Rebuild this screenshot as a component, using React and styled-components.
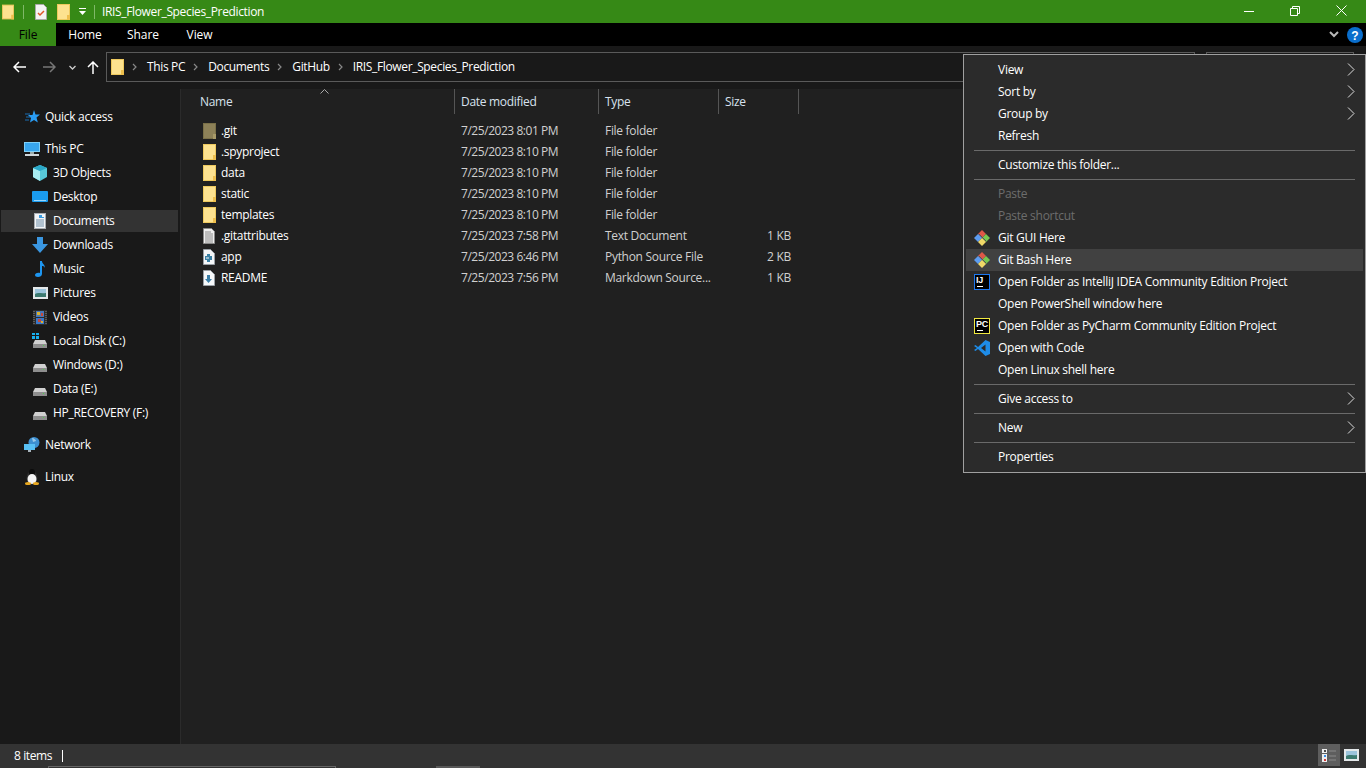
import React from "react";
import styled, { createGlobalStyle } from "styled-components";

const Global = createGlobalStyle`
  html, body { margin: 0; padding: 0; background: #202020; }
  body { font-family: "Open Sans", "Noto Sans", "Liberation Sans", sans-serif; font-size: 12px; color: #fff; }
  * { box-sizing: border-box; }
`;

const Window = styled.div`
  position: relative;
  width: 1366px;
  height: 768px;
  overflow: hidden;
  display: flex;
  flex-direction: column;
  background: #202020;
`;

const Label = styled.span`
  margin-bottom: 2px;
`;

const TitleBar = styled.div`
  height: 23px;
  background: #368916;
  display: flex;
  align-items: center;
  padding-left: 2px;
`;

const QuickSlot = styled.span`
  display: flex;
  align-items: center;
  margin-left: ${(p) => p.$ml || 0}px;
`;

const Divider = styled.div`
  width: 1px;
  height: 14px;
  margin-left: ${(p) => p.$ml}px;
  background: #80b868;
`;

const Title = styled.span`
  margin-left: 7px;
  letter-spacing: -0.35px;
`;

const WindowButtons = styled.div`
  margin-left: auto;
  display: flex;
  align-items: center;
  padding-right: 2px;
`;

const WinBtn = styled.div`
  width: 46px;
  height: 23px;
  padding-bottom: 2px;
  display: flex;
  align-items: center;
  justify-content: center;
`;

const Ribbon = styled.div`
  height: 23px;
  background: #000;
  display: flex;
  align-items: stretch;
  padding-right: 3px;
`;

const RibbonTab = styled.div`
  width: ${(p) => p.$w}px;
  display: flex;
  align-items: center;
  justify-content: center;
  letter-spacing: -0.1px;
  background: ${(p) => (p.$active ? "#368916" : "transparent")};
  color: ${(p) => (p.$active ? "#000" : "#fff")};
`;

const RibbonRight = styled.div`
  margin-left: auto;
  display: flex;
  align-items: center;
  gap: 8px;
`;

const NavRow = styled.div`
  height: 43px;
  background: #191919;
  display: flex;
  align-items: flex-start;
  padding-top: 6px;
`;

const NavButtons = styled.div`
  width: 106px;
  height: 30px;
  display: flex;
  align-items: center;
  padding-left: 13px;
`;

const NavIcon = styled.svg`
  margin-left: ${(p) => p.$ml || 0}px;
  flex: none;
`;

const AddressBox = styled.div`
  width: 1089px;
  height: 30px;
  border: 1px solid #5a5a5a;
  display: flex;
  align-items: center;
  padding-left: 4px;
  letter-spacing: -0.35px;
`;

const CrumbArrow = styled.svg`
  width: 5px;
  height: 8px;
  margin: 0 10px 0 8px;
`;

const SearchBox = styled.div`
  width: 148px;
  height: 30px;
  margin-left: 11px;
  border: 1px solid #5a5a5a;
`;

const Main = styled.div`
  flex: 1;
  display: flex;
  min-height: 0;
`;

const Sidebar = styled.div`
  width: 181px;
  background: #191919;
  border-right: 1px solid #2b2b2b;
  padding-top: 17px;
`;

const TreeGroup = styled.div`
  display: flex;
  flex-direction: column;
  gap: 2px;
  margin-bottom: 10px;
`;

const TreeRow = styled.div`
  height: 22px;
  margin: 0 2px 0 1px;
  padding-left: ${(p) => (p.$child ? 31 : 23)}px;
  display: flex;
  align-items: center;
  gap: 5px;
  background: ${(p) => (p.$selected ? "#333" : "transparent")};
  letter-spacing: -0.3px;
  white-space: nowrap;
`;

const IconSlot = styled.span`
  width: 16px;
  height: 16px;
  flex: none;
  display: flex;
  align-items: center;
  justify-content: center;
`;

const FileIconSlot = styled.span`
  width: 16px;
  height: 16px;
  flex: none;
  padding-left: 1px;
  display: flex;
  align-items: center;
`;

const Content = styled.div`
  flex: 1;
  background: #202020;
`;

const Header = styled.div`
  position: relative;
  height: 25px;
  display: flex;
`;

const HeadCell = styled.div`
  width: ${(p) => p.$w}px;
  height: 25px;
  padding-left: ${(p) => p.$pad || 6}px;
  display: flex;
  align-items: center;
  color: #d8e2ee;
  border-right: 1px solid #555;
  letter-spacing: -0.3px;
`;

const SortCaret = styled.svg`
  position: absolute;
  left: 139px;
  top: 0;
`;

const FileRows = styled.div`
  margin-top: 6px;
`;

const FileRow = styled.div`
  height: 21px;
  display: flex;
  align-items: center;
  letter-spacing: -0.3px;
  white-space: nowrap;
`;

const NameCell = styled.div`
  width: 274px;
  padding-left: 21px;
  display: flex;
  align-items: center;
  gap: 3px;
`;

const Cell = styled.div`
  width: ${(p) => p.$w}px;
  padding-left: 6px;
  color: #d0d0d0;
  overflow: hidden;
  letter-spacing: ${(p) => p.$ls || -0.3}px;
`;

const SizeCell = styled.div`
  width: 72px;
  text-align: right;
  color: #d0d0d0;
`;

const StatusBar = styled.div`
  position: relative;
  height: 24px;
  background: #333;
  display: flex;
  align-items: center;
  padding-left: 14px;
  letter-spacing: -0.4px;
`;

const StatusSep = styled.div`
  width: 1px;
  height: 12px;
  margin-left: 10px;
  background: #fff;
`;

const ViewToggle = styled.div`
  width: 22px;
  height: 22px;
  display: flex;
  align-items: center;
  justify-content: center;
  background: ${(p) => (p.$on ? "#5e5e5e" : "transparent")};
`;

const StatusRight = styled.div`
  margin-left: auto;
  align-self: flex-start;
  display: flex;
  align-items: center;
  padding-right: 4px;
`;

const BottomTab = styled.div`
  position: absolute;
  left: 48px;
  bottom: 0;
  width: 288px;
  height: 2px;
  border: 1px solid #666;
  border-bottom: 0;
`;

const BottomBlock = styled.div`
  position: absolute;
  left: 436px;
  bottom: 0;
  width: 44px;
  height: 2px;
  background: #585858;
`;

const Menu = styled.div`
  position: absolute;
  left: 963px;
  top: 54px;
  width: 403px;
  height: 419px;
  background: #2b2b2b;
  border: 1px solid #a0a0a0;
  padding: 4px 2px;
`;

const MenuItem = styled.div`
  position: relative;
  height: 22px;
  padding-left: 32px;
  display: flex;
  align-items: center;
  color: ${(p) => (p.$disabled ? "#6d6d6d" : "#fff")};
  background: ${(p) => (p.$hover ? "#414141" : "transparent")};
  letter-spacing: -0.27px;
`;

const MenuIcon = styled.span`
  position: absolute;
  left: 8px;
  top: 3px;
  width: 16px;
  height: 16px;
  display: flex;
`;

const MenuArrow = styled.svg`
  position: absolute;
  right: 8px;
  top: 4px;
`;

const MenuSep = styled.div`
  height: 1px;
  margin: 3px 8px;
  background: #6a6a6a;
`;

const Folder = ({ w = 13, h = 16, dark }) => (
  <svg width={w} height={h} viewBox="0 0 13 16">
    <rect x="0.500" y="0.500" width="12" height="15" fill={dark ? "#8d8158" : "#fde28f"} stroke={dark ? "#7a7048" : "#eec95e"} />
    <rect x="10" y="11" width="3" height="5" fill={dark ? "#a89a68" : "#eebf4d"} />
  </svg>
);

const TextFile = () => (
  <svg width="12" height="16" viewBox="0 0 12 16">
    <path d="M.5.5h8l3 3v12H.5z" fill="#eee" stroke="#8a8a8a" />
    <path d="M2 4h6M2 6h8M2 8h8M2 10h8M2 12h8M2 14h8" stroke="#8c8c8c" />
  </svg>
);

const PyFile = () => (
  <svg width="12" height="16" viewBox="0 0 12 16">
    <path d="M.5.5h7l4 4v11H.5z" fill="#f4f6f8" stroke="#9aa0a6" />
    <path d="M4 5h3v2h2v4H7v2H4v-2H2V7h2z" fill="#3a80a4" />
    <path d="M3 9h3" stroke="#f4f6f8" />
  </svg>
);

const MdFile = () => (
  <svg width="12" height="16" viewBox="0 0 12 16">
    <path d="M.5.5h7l4 4v11H.5z" fill="#f6f8fa" stroke="#9aa0a6" />
    <path d="M4 5h3v4h2l-3.500 4L2 9h2z" fill="#3c7fa8" />
  </svg>
);

const Star = () => (
  <svg width="16" height="16" viewBox="0 0 16 16">
    <path d="M10 1l1.500 4.500H16l-3.500 3 1.300 5L10 11l-4 2.500 1-4.500L4 6h4.500z" fill="#2a9df4" />
    <path d="M1 5h5M2 8h4M1 11h4" stroke="#1a6fb4" />
  </svg>
);

const Pc = () => (
  <svg width="16" height="16" viewBox="0 0 16 16">
    <rect x="0" y="1" width="16" height="10" fill="#7fd0f8" />
    <rect x="1" y="2" width="14" height="8" fill="#38a6ee" />
    <rect x="6" y="11" width="4" height="2" fill="#9aa" />
    <rect x="1" y="13" width="14" height="2" fill="#cfd6da" />
  </svg>
);

const Cube = () => (
  <svg width="16" height="16" viewBox="0 0 16 16">
    <path d="M8 0l7 3v9l-7 4-7-4V3z" fill="#58c8d8" />
    <path d="M1 3l7 3v10l-7-4z" fill="#a8ecf0" />
    <path d="M8 0l7 3-7 3-7-3z" fill="#2aa8c8" />
  </svg>
);

const Desktop = () => (
  <svg width="16" height="16" viewBox="0 0 16 16">
    <rect x="0" y="2" width="16" height="11" rx="1" fill="#1a9cf0" />
    <rect x="2" y="11" width="12" height="1" fill="#9ad4f8" />
  </svg>
);

const Docs = () => (
  <svg width="12" height="16" viewBox="0 0 12 16">
    <rect x=".5" y=".5" width="11" height="15" fill="#f2f4f6" stroke="#a8adb2" />
    <path d="M5 2h3v2h2v1H5z" fill="#3a9ce0" />
    <path d="M2 7h8M2 9h8M2 11h8M2 13h8" stroke="#6f8ea8" />
  </svg>
);

const Down = () => (
  <svg width="16" height="16" viewBox="0 0 16 16">
    <path d="M5 0h6v7h5l-8 9-8-9h5z" fill="#3a96e0" />
  </svg>
);

const Music = () => (
  <svg width="12" height="16" viewBox="0 0 12 16">
    <path d="M6 0h2c0 3 3 3 3 7-1-2-2-2-3-2v8c0 2-2 3-4 3s-3-1-3-2 2-3 5-2z" fill="#1e96f0" />
  </svg>
);

const Pictures = () => (
  <svg width="15" height="12" viewBox="0 0 15 12">
    <rect x="0" y="0" width="15" height="12" fill="#e4e8ea" />
    <rect x="2" y="2" width="11" height="8" fill="#9cc4dc" />
    <path d="M2 7c3-2 6 0 11-1v4H2z" fill="#3c7a70" />
  </svg>
);

const Videos = () => (
  <svg width="14" height="15" viewBox="0 0 14 15">
    <rect width="14" height="15" fill="#2c2c2c" />
    <rect x="3" y="1" width="8" height="6" fill="#4a78b8" />
    <rect x="4" y="2" width="3" height="3" fill="#d8b030" />
    <rect x="8" y="3" width="2" height="3" fill="#c84838" />
    <rect x="3" y="8" width="8" height="6" fill="#3a78c8" />
    <rect x="5" y="9" width="3" height="3" fill="#c84838" />
    <rect x="8" y="11" width="2" height="2" fill="#d8b030" />
    <path d="M1 1v13M13 1v13" stroke="#888" strokeDasharray="1 1" />
  </svg>
);

const Disk = ({ win }) => (
  <svg width="16" height="16" viewBox="0 0 16 16">
    {win && <path d="M0 3h3v3H0zM4 3h3v3H4zM0 0h3v2H0zM4 0h3v2H4z" fill="#18b0f0" />}
    <path d="M3 7h10l2 4H1z" fill="#d0d0d0" />
    <rect x="1" y="11" width="14" height="4" fill="#8e8e8e" />
    <rect x="11" y="12" width="1" height="1" fill="#48d848" />
  </svg>
);

const Net = () => (
  <svg width="16" height="16" viewBox="0 0 16 16">
    <circle cx="10" cy="5.500" r="5.500" fill="#3d8fd0" />
    <path d="M8 1c2 0 4 2 4 3l-3 1z" fill="#9ac8e8" />
    <rect x="0" y="7" width="11" height="6" fill="#58c0f4" />
    <rect x="4" y="13" width="3" height="2" fill="#a8b4bc" />
  </svg>
);

const Tux = () => (
  <svg width="14" height="16" viewBox="0 0 14 16">
    <ellipse cx="7" cy="9" rx="5.500" ry="7" fill="#2a2a2a" />
    <ellipse cx="7" cy="3.500" rx="3" ry="3.500" fill="#0c0c0c" />
    <ellipse cx="7" cy="10" rx="4.500" ry="5" fill="#f4f4f4" />
    <ellipse cx="3" cy="14.500" rx="3" ry="1.500" fill="#e8a820" />
    <ellipse cx="11" cy="14.500" rx="3" ry="1.500" fill="#e8a820" />
  </svg>
);

const GitGem = () => (
  <svg width="16" height="16" viewBox="0 0 16 16">
    <path d="M8 0l4 4-4 4-4-4z" fill="#e05848" />
    <path d="M0 8l4-4 4 4-4 4z" fill="#5c9cf0" />
    <path d="M16 8l-4-4-4 4 4 4z" fill="#78c850" />
    <path d="M8 16l-4-4 4-4 4 4z" fill="#f0d868" />
    <path d="M5 4l7 7" stroke="#555" strokeWidth="1" />
  </svg>
);

const JetIcon = ({ color, children }) => (
  <svg width="16" height="16" viewBox="0 0 16 16">
    <rect x=".5" y=".5" width="15" height="15" fill="#000" stroke={color} />
    <text x="2" y="9" fontSize="9" fontWeight="700" fill="#fff" fontFamily="Liberation Sans, sans-serif">{children}</text>
    <rect x="3" y="12" width="6" height="1" fill="#fff" />
  </svg>
);

const VsCode = () => (
  <svg width="16" height="16" viewBox="0 0 16 16">
    <path d="M11.500 0L16 2v12l-4.500 2L4 9l-2.500 2L0 10l3-2-3-2 1.500-1L4 7z" fill="#1e8ce8" />
    <path d="M11.500 4.500v7L7 8z" fill="#2b2b2b" />
  </svg>
);

const tree = [
  [{ label: "Quick access", icon: <Star /> }],
  [
    { label: "This PC", icon: <Pc /> },
    { label: "3D Objects", icon: <Cube />, child: true },
    { label: "Desktop", icon: <Desktop />, child: true },
    { label: "Documents", icon: <Docs />, child: true, selected: true },
    { label: "Downloads", icon: <Down />, child: true },
    { label: "Music", icon: <Music />, child: true },
    { label: "Pictures", icon: <Pictures />, child: true },
    { label: "Videos", icon: <Videos />, child: true },
    { label: "Local Disk (C:)", icon: <Disk win />, child: true },
    { label: "Windows (D:)", icon: <Disk />, child: true },
    { label: "Data (E:)", icon: <Disk />, child: true },
    { label: "HP_RECOVERY (F:)", icon: <Disk />, child: true },
  ],
  [{ label: "Network", icon: <Net /> }],
  [{ label: "Linux", icon: <Tux /> }],
];

const files = [
  { name: ".git", date: "7/25/2023 8:01 PM", type: "File folder", icon: <Folder dark /> },
  { name: ".spyproject", date: "7/25/2023 8:10 PM", type: "File folder", icon: <Folder /> },
  { name: "data", date: "7/25/2023 8:10 PM", type: "File folder", icon: <Folder /> },
  { name: "static", date: "7/25/2023 8:10 PM", type: "File folder", icon: <Folder /> },
  { name: "templates", date: "7/25/2023 8:10 PM", type: "File folder", icon: <Folder /> },
  { name: ".gitattributes", date: "7/25/2023 7:58 PM", type: "Text Document", size: "1 KB", icon: <TextFile /> },
  { name: "app", date: "7/25/2023 6:46 PM", type: "Python Source File", size: "2 KB", icon: <PyFile /> },
  { name: "README", date: "7/25/2023 7:56 PM", type: "Markdown Source...", size: "1 KB", icon: <MdFile /> },
];

const menu = [
  { label: "View", arrow: true },
  { label: "Sort by", arrow: true },
  { label: "Group by", arrow: true },
  { label: "Refresh" },
  { sep: true },
  { label: "Customize this folder..." },
  { sep: true },
  { label: "Paste", disabled: true },
  { label: "Paste shortcut", disabled: true },
  { label: "Git GUI Here", icon: <GitGem /> },
  { label: "Git Bash Here", icon: <GitGem />, hover: true },
  { label: "Open Folder as IntelliJ IDEA Community Edition Project", icon: <JetIcon color="#1e78f0">IJ</JetIcon> },
  { label: "Open PowerShell window here" },
  { label: "Open Folder as PyCharm Community Edition Project", icon: <JetIcon color="#f0e840">PC</JetIcon> },
  { label: "Open with Code", icon: <VsCode /> },
  { label: "Open Linux shell here" },
  { sep: true },
  { label: "Give access to", arrow: true },
  { sep: true },
  { label: "New", arrow: true },
  { sep: true },
  { label: "Properties" },
];

const crumbs = ["This PC", "Documents", "GitHub", "IRIS_Flower_Species_Prediction"];

export default function App() {
  return (
    <Window>
      <Global />
      <TitleBar>
        <QuickSlot><Folder w={12} h={16} /></QuickSlot>
        <Divider $ml={9} />
        <QuickSlot $ml={11}>
          <svg width="12" height="16" viewBox="0 0 12 16">
            <path d="M.5.5h8l3 3v12H.5z" fill="#f4f4f4" stroke="#aaa" />
            <path d="M3 9l2 2 4-4" fill="none" stroke="#e0562a" strokeWidth="1.500" />
          </svg>
        </QuickSlot>
        <QuickSlot $ml={10}><Folder w={13} h={16} /></QuickSlot>
        <QuickSlot $ml={9}>
          <svg width="7" height="7" viewBox="0 0 7 7">
            <path d="M0 .5h7" stroke="#fff" />
            <path d="M0 3h7L3.500 7z" fill="#fff" />
          </svg>
        </QuickSlot>
        <Divider $ml={8} />
        <Title>IRIS_Flower_Species_Prediction</Title>
        <WindowButtons>
          <WinBtn>
            <svg width="10" height="10" viewBox="0 0 10 10"><path d="M0 5.500h10" stroke="#fff" /></svg>
          </WinBtn>
          <WinBtn>
            <svg width="10" height="10" viewBox="0 0 10 10">
              <path d="M2.500 2.500V.5h7v7h-2M.5 2.500h7v7h-7z" fill="none" stroke="#fff" />
            </svg>
          </WinBtn>
          <WinBtn>
            <svg width="11" height="11" viewBox="0 0 11 11"><path d="M.5.5l10 10M10.500.5l-10 10" stroke="#fff" /></svg>
          </WinBtn>
        </WindowButtons>
      </TitleBar>

      <Ribbon>
        <RibbonTab $active $w={56}>File</RibbonTab>
        <RibbonTab $w={58}>Home</RibbonTab>
        <RibbonTab $w={58}>Share</RibbonTab>
        <RibbonTab $w={55}>View</RibbonTab>
        <RibbonRight>
          <svg width="10" height="7" viewBox="0 0 10 7">
            <path d="M1 1l4 4 4-4" fill="none" stroke="#b8b8b8" strokeWidth="2" />
          </svg>
          <svg width="16" height="16" viewBox="0 0 16 16">
            <circle cx="8" cy="8" r="8" fill="#0a6ecc" />
            <text x="8" y="12.500" textAnchor="middle" fontSize="12" fontWeight="700" fill="#fff" fontFamily="Liberation Sans, sans-serif">?</text>
          </svg>
        </RibbonRight>
      </Ribbon>

      <NavRow>
        <NavButtons>
          <NavIcon width="13" height="12" viewBox="0 0 13 12">
            <path d="M6 1L1 6l5 5M1 6h12" fill="none" stroke="#fff" strokeWidth="1.500" />
          </NavIcon>
          <NavIcon $ml={17} width="13" height="12" viewBox="0 0 13 12">
            <path d="M7 1l5 5-5 5M12 6H0" fill="none" stroke="#777" strokeWidth="1.500" />
          </NavIcon>
          <NavIcon $ml={13} width="7" height="5" viewBox="0 0 7 5">
            <path d="M.5 1l3 3 3-3" fill="none" stroke="#ccc" strokeWidth="1.300" />
          </NavIcon>
          <NavIcon $ml={11} width="12" height="13" viewBox="0 0 12 13">
            <path d="M1 6l5-5 5 5M6 1v12" fill="none" stroke="#fff" strokeWidth="1.500" />
          </NavIcon>
        </NavButtons>
        <AddressBox>
          <Folder w={13} h={16} />
          {crumbs.map((c) => (
            <React.Fragment key={c}>
              <CrumbArrow viewBox="0 0 5 8"><path d="M1 1l3 3-3 3" fill="none" stroke="#888" strokeWidth="1.200" /></CrumbArrow>
              <Label>{c}</Label>
            </React.Fragment>
          ))}
        </AddressBox>
        <SearchBox />
      </NavRow>

      <Main>
        <Sidebar>
          {tree.map((group, i) => (
            <TreeGroup key={i}>
              {group.map((row) => (
                <TreeRow key={row.label} $child={row.child} $selected={row.selected}>
                  <IconSlot>{row.icon}</IconSlot>
                  <Label>{row.label}</Label>
                </TreeRow>
              ))}
            </TreeGroup>
          ))}
        </Sidebar>
        <Content>
          <Header>
            <HeadCell $w={274} $pad={19}>Name</HeadCell>
            <HeadCell $w={144}>Date modified</HeadCell>
            <HeadCell $w={120}>Type</HeadCell>
            <HeadCell $w={80}>Size</HeadCell>
            <SortCaret width="9" height="5" viewBox="0 0 9 5">
              <path d="M.5 4.500l4-4 4 4" fill="none" stroke="#aaa" />
            </SortCaret>
          </Header>
          <FileRows>
            {files.map((f) => (
              <FileRow key={f.name}>
                <NameCell><FileIconSlot>{f.icon}</FileIconSlot>{f.name}</NameCell>
                <Cell $w={144} $ls={-0.45}>{f.date}</Cell>
                <Cell $w={120}>{f.type}</Cell>
                <SizeCell>{f.size}</SizeCell>
              </FileRow>
            ))}
          </FileRows>
        </Content>
      </Main>

      <StatusBar>
        <Label>8 items</Label>
        <StatusSep />
        <StatusRight>
          <ViewToggle $on>
            <svg width="16" height="15" viewBox="0 0 16 15">
              <rect x="1" y="1" width="5" height="4" fill="#eee" />
              <rect x="3" y="2" width="2" height="2" fill="#4a4a4a" />
              <rect x="1" y="6" width="5" height="4" fill="#eee" />
              <rect x="3" y="7" width="2" height="2" fill="#3a8ee8" />
              <rect x="1" y="10" width="5" height="4" fill="#eee" />
              <rect x="3" y="11" width="2" height="2" fill="#d03838" />
              <path d="M8 3h7M8 8h7M8 12h7" stroke="#8a8a8a" />
            </svg>
          </ViewToggle>
          <ViewToggle>
            <Pictures />
          </ViewToggle>
        </StatusRight>
        <BottomTab />
        <BottomBlock />
      </StatusBar>

      <Menu>
        {menu.map((m, i) =>
          m.sep ? (
            <MenuSep key={i} />
          ) : (
            <MenuItem key={m.label} $disabled={m.disabled} $hover={m.hover}>
              {m.icon && <MenuIcon>{m.icon}</MenuIcon>}
              <Label>{m.label}</Label>
              {m.arrow && (
                <MenuArrow width="8" height="13" viewBox="0 0 8 13">
                  <path d="M1 .5l6 6-6 6" fill="none" stroke="#dcdcdc" />
                </MenuArrow>
              )}
            </MenuItem>
          )
        )}
      </Menu>
    </Window>
  );
}
